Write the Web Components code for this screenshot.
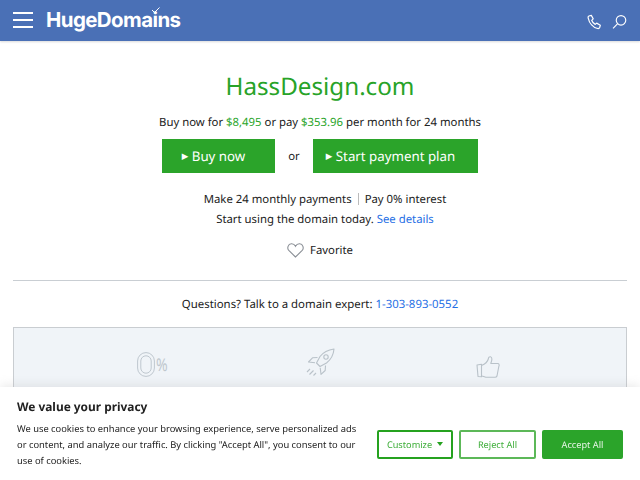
<!DOCTYPE html>
<html lang="en">
<head>
<meta charset="utf-8">
<title>HassDesign.com</title>
<style>
  html, body { margin: 0; height: 480px; overflow: hidden; background: #fff; }
  body { font-family: "Noto Sans", sans-serif; color: #222; text-rendering: geometricPrecision; }
</style>
</head>
<body>
<site-header></site-header>
<domain-offer name="HassDesign.com" price="$8,495" monthly="$353.96" months="24"></domain-offer>
<expert-line phone="1-303-893-0552"></expert-line>
<perks-box></perks-box>
<cookie-banner></cookie-banner>

<script>
class SiteHeader extends HTMLElement {
  constructor() {
    super();
    this.attachShadow({ mode: "open" }).innerHTML = `
    <style>
      :host { display: flex; align-items: center; height: 41px; background: #4a70b6; box-shadow: 0 1px 2px rgba(0,0,0,.15); position: relative; padding: 0 13px; }
      .menu { display: flex; flex-direction: column; gap: 5.5px; width: 20px; margin-right: 13px; margin-top: -1px; }
      .menu i { display: block; height: 1.5px; background: #fff; }
      .logo { position: relative; font: 700 20.5px/1 "Inter", sans-serif; letter-spacing: -.6px; color: #fff; }
      .logo svg { position: absolute; left: 105px; top: -3px; }
      .icons { margin-left: auto; display: flex; gap: 10px; align-items: center; margin-top: 2px; }
      svg { display: block; }
    </style>
    <div class="menu"><i></i><i></i><i></i></div>
    <div class="logo">HugeDomains<svg width="10" height="7" viewBox="0 0 10 7" fill="none" stroke="#fff" stroke-width="1"><path d="M1 3l2.500 2.500L8.500 .5"/></svg></div>
    <div class="icons">
      <svg width="15" height="16" viewBox="0 0 16 16" fill="none" stroke="#fff" stroke-width="1.300" stroke-linejoin="round"><path d="M2 1.600L4.600 .9 6.600 4.600 5 6.200c.6 1.800 2 3.400 3.800 4.300l1.500-1.300 3.900 2.300-.7 2.400c-.3.8-1.200 1.200-2.200 1C6.600 13.800 2.400 9.300 1.200 3.600 1 2.700 1.300 1.900 2 1.600z"/></svg>
      <svg width="15" height="16" viewBox="0 0 17 17" fill="none" stroke="#fff" stroke-width="1.300"><circle cx="10.200" cy="6.600" r="5.400"/><path d="M6.400 10.400L1.200 15.800"/></svg>
    </div>`;
  }
}

class DomainOffer extends HTMLElement {
  constructor() {
    super();
    this.attachShadow({ mode: "open" });
  }
  connectedCallback() {
    const name = this.getAttribute("name");
    const price = this.getAttribute("price");
    const monthly = this.getAttribute("monthly");
    const months = this.getAttribute("months");
    this.shadowRoot.innerHTML = `
    <style>
      :host { display: flex; flex-direction: column; align-items: center; margin: 0 13px; border-bottom: 1px solid #c9ced3; height: 239px; font-size: 11.350px; color: #222; }
      h1 { margin: 26px 0 0; font: 400 24.200px/40px "Noto Sans", sans-serif; color: #28a328; }
      .price { margin-top: 7px; line-height: 18px; }
      .price b { font-weight: 400; color: #2aa52a; }
      .cta { display: flex; align-items: center; margin-top: 7px; }
      .or { width: 38px; text-align: center; }
      a.btn { display: flex; align-items: center; justify-content: center; box-sizing: border-box; padding-right: 10px; height: 34px; background: #2ba42a; color: #fff; font-size: 13.300px; }
      a.btn span { font-size: 8.500px; margin-right: 3.500px; }
      .buy { width: 113px; }
      .plan { width: 165px; }
      .terms { margin-top: 17px; padding-left: 10px; line-height: 20px; text-align: center; }
      .terms i { display: inline-block; width: 1px; height: 12px; background: #bbb; margin: 0 6px; vertical-align: -2px; }
      .terms a { color: #1f6fe5; }
      .fav { display: flex; align-items: center; gap: 6px; margin-top: 11px; line-height: 20px; }
      .fav svg { margin-top: -2px; }
      svg { display: block; }
    </style>
    <h1>${name}</h1>
    <div class="price">Buy now for <b>${price}</b> or pay <b>${monthly}</b> per month for ${months} months</div>
    <div class="cta">
      <a class="btn buy"><span>▶</span>Buy now</a>
      <div class="or">or</div>
      <a class="btn plan"><span>▶</span>Start payment plan</a>
    </div>
    <div class="terms">
      Make ${months} monthly payments<i></i>Pay 0% interest<br>
      Start using the domain today. <a>See details</a>
    </div>
    <div class="fav">
      <svg width="17" height="15" viewBox="0 0 17 15" fill="none" stroke="#8a8f96" stroke-width="1.100"><path d="M8.500 14L1.800 7.400C-.2 5.200 1 1 4.400 .8c1.800-.1 3.200.9 4.100 2.500C9.400 1.700 10.800.7 12.600.8 16 1 17.200 5.200 15.200 7.400z"/></svg>
      Favorite
    </div>`;
  }
}

class ExpertLine extends HTMLElement {
  constructor() {
    super();
    this.attachShadow({ mode: "open" });
  }
  connectedCallback() {
    this.shadowRoot.innerHTML = `
    <style>
      :host { display: block; text-align: center; font-size: 11.400px; line-height: 20px; margin-top: 14px; color: #222; }
      a { color: #1f6fe5; }
    </style>
    Questions? Talk to a domain expert: <a>${this.getAttribute("phone")}</a>`;
  }
}

class PerksBox extends HTMLElement {
  constructor() {
    super();
    this.attachShadow({ mode: "open" }).innerHTML = `
    <style>
      :host { display: grid; grid-template-columns: 277px 1fr 1fr; margin: 12px 13px 0; height: 200px; box-sizing: border-box; background: #f0f4f8; border: 1px solid #c9cdd1; }
      div { display: flex; justify-content: flex-start; }
      .pct { font-size: 14px; line-height: 20px; color: #c0c8ce; margin: 5px 0 0 1px; transform: scaleY(1.25); transform-origin: 50% 80%; }
      svg { display: block; }
    </style>
    <div style="padding:24px 0 0 123px;align-items:flex-start">
      <svg width="18" height="25" viewBox="0 0 18 25" fill="none" stroke="#b9c2c9" stroke-width=".9">
        <rect x=".6" y=".6" width="16.800" height="23.800" rx="8.400"/><rect x="3.800" y="3.800" width="10.400" height="17.400" rx="5.200"/>
      </svg>
      <span class="pct">%</span>
    </div>
    <div style="padding:20px 0 0 14px;align-items:flex-start">
      <svg width="30" height="30" viewBox="0 0 30 30" fill="none" stroke="#b9c2c9" stroke-width="1.100" stroke-linejoin="round">
        <path d="M29 1c-6 .8-10.500 3-14 7.500l-3.500 6.500 3.500 3.500 6.500-3.500C26 11.500 28.500 7 29 1z"/>
        <circle cx="21" cy="9" r="2.200"/>
        <path d="M12.500 9.500L7.500 9.800 3.500 14l6.500 .8M20.500 17.500l-.3 5-4.200 3.800-.8-6.500"/>
        <path d="M5 21l-3 3M8.500 22.500l-4 4M11 25l-2.500 2.500"/>
      </svg>
    </div>
    <div style="padding:28px 0 0 17px;align-items:flex-start">
      <svg width="24" height="23" viewBox="0 0 24 23" fill="none" stroke="#b9c2c9" stroke-width="1.100" stroke-linejoin="round">
        <path d="M1 9l4.500-.8v12.600L2 20.500z"/>
        <path d="M5.500 9.500c3-1.200 6-3.400 6.800-6.500.3-1.500 1-2.500 2.200-2.200 1.500.4 1.500 2.400 1.100 4L14.800 7.500H22c1.300.3 1.400 2 .8 3L21 20c-.4 1-1 1.200-2 1.200H11c-2 0-3-1-5.500-1.200"/>
      </svg>
    </div>`;
  }
}

class CookieBanner extends HTMLElement {
  constructor() {
    super();
    this.attachShadow({ mode: "open" }).innerHTML = `
    <style>
      :host { display: block; position: fixed; left: 0; right: 0; bottom: 0; height: 93px; box-sizing: border-box; background: #fff; box-shadow: 0 -1px 10px 0 rgba(172,171,171,.3); padding: 11px 17px 0 17px; color: #212121; font-size: 9.330px; }
      h2 { margin: 0; font: 700 11.900px/19px "Noto Sans", sans-serif; }
      .row { display: flex; justify-content: space-between; align-items: center; margin-top: 4px; }
      p { margin: 0; line-height: 16px; flex: none; white-space: nowrap; }
      .btns { display: flex; gap: 6px; margin-top: -2px; }
      button { font: 400 9.200px "Noto Sans", sans-serif; height: 29px; box-sizing: border-box; border: 2px solid #25a21f; border-radius: 2px; background: #fff; color: #3fae3a; padding: 0; text-rendering: geometricPrecision; }
      .cust { width: 76px; display: flex; align-items: center; justify-content: center; gap: 5px; }
      .cust::after { content: ""; border: 3.500px solid transparent; border-top: 4px solid #25a21f; border-bottom: 0; }
      .rej { width: 77px; border-color: #5cb858; }
      .acc { width: 81px; background: #2ba42a; border-color: #2ba42a; color: #e6f5e6; }
    </style>
    <h2>We value your privacy</h2>
    <div class="row">
      <p>We use cookies to enhance your browsing experience, serve personalized ads<br>or content, and analyze our traffic. By clicking "Accept All", you consent to our<br>use of cookies.</p>
      <div class="btns">
        <button class="cust">Customize</button>
        <button class="rej">Reject All</button>
        <button class="acc">Accept All</button>
      </div>
    </div>`;
  }
}

customElements.define("site-header", SiteHeader);
customElements.define("domain-offer", DomainOffer);
customElements.define("expert-line", ExpertLine);
customElements.define("perks-box", PerksBox);
customElements.define("cookie-banner", CookieBanner);
</script>
</body>
</html>
